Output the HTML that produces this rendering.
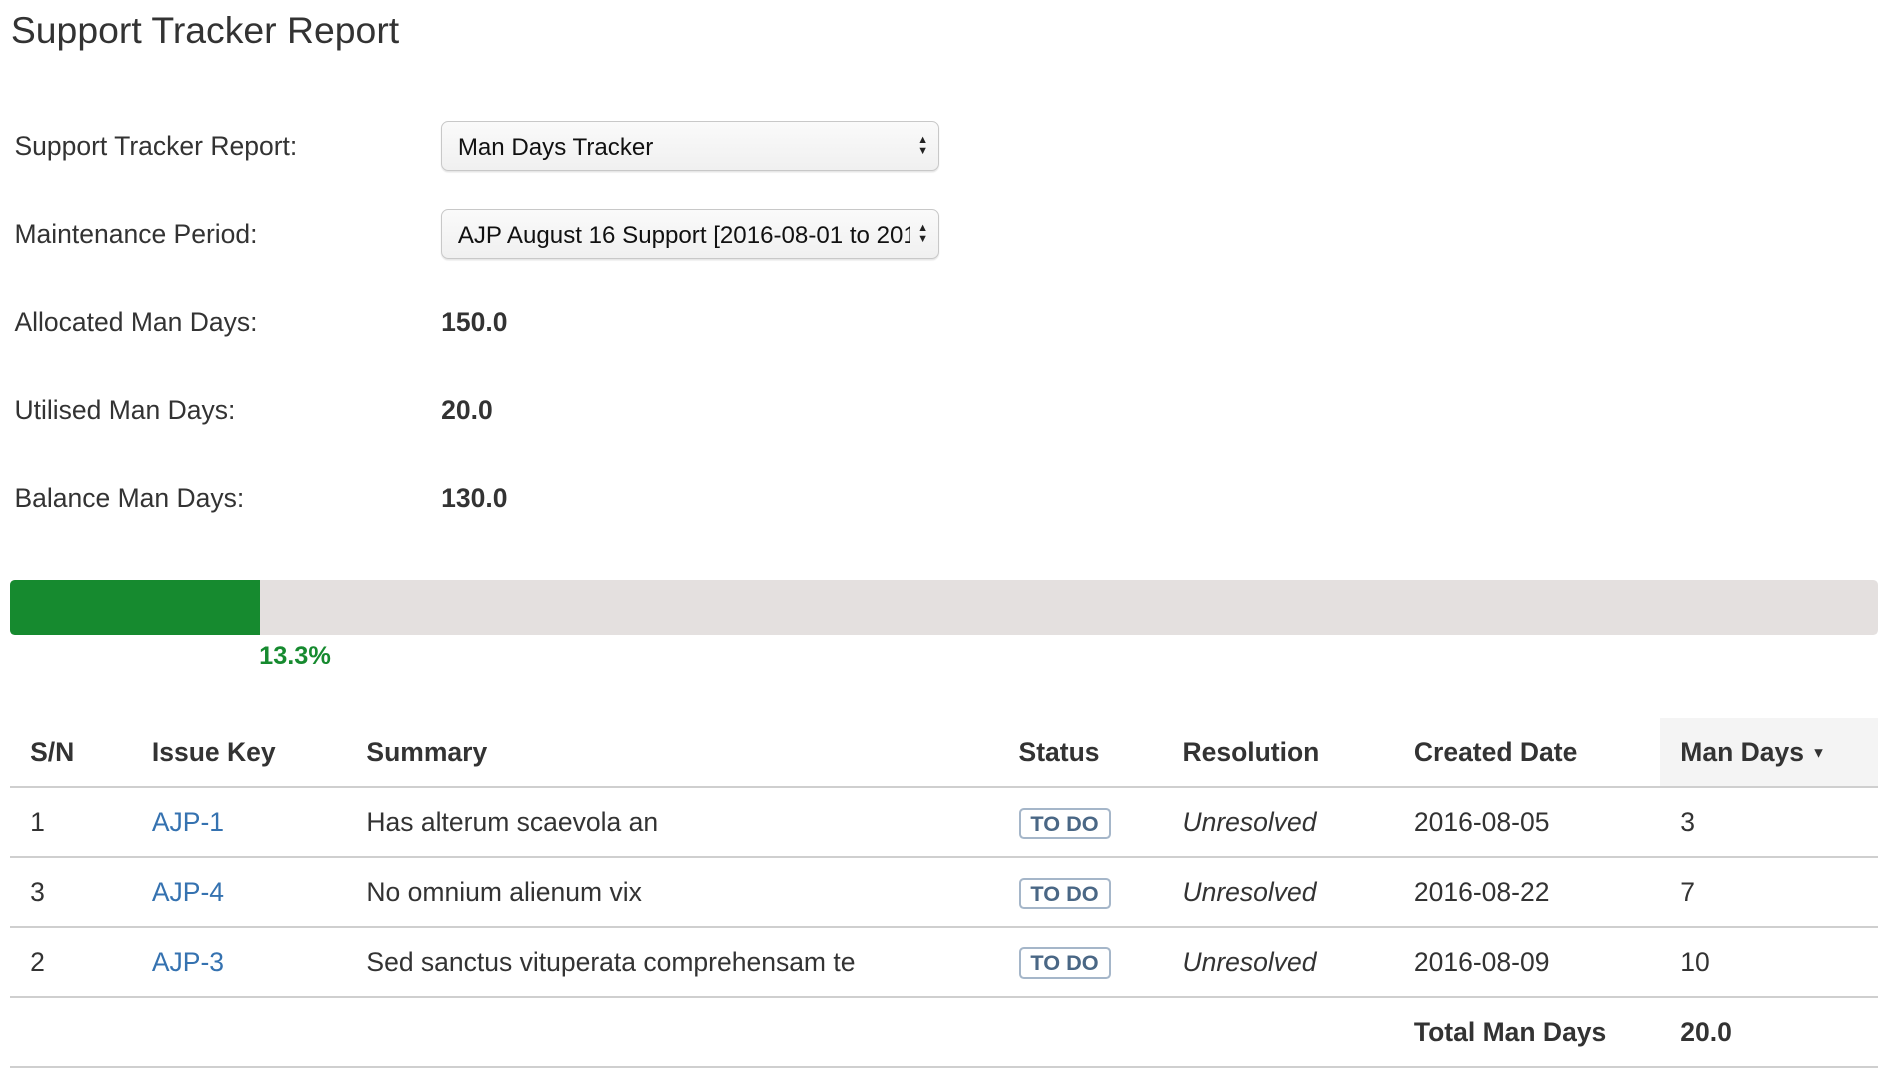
<!DOCTYPE html>
<html><head><meta charset="utf-8"><style>
html,body{margin:0;padding:0;background:#fff;overflow:hidden}
body{width:1568px;height:896px;zoom:1.20536;position:relative;font-family:"Liberation Sans",Arial,sans-serif;color:#333}
.a{position:absolute;white-space:nowrap;line-height:1}
.lbl{font-size:22px;left:12px}
.val{font-size:22px;left:366px;font-weight:bold}
.sel{position:absolute;left:366px;width:411px;height:40px;border:1px solid #c8c8c8;border-radius:6px;background:linear-gradient(#fafafa,#f0f0f0);box-shadow:0 1px 1px rgba(0,0,0,.1)}
.sel span{position:absolute;left:13px;top:10px;font-size:20px;color:#111;white-space:nowrap;overflow:hidden;width:375px}
.arr{position:absolute;right:8px;top:11px;font-size:9px;line-height:9px;color:#222}
.th{font-size:22px;font-weight:bold}
.td{font-size:22px}
.ln{position:absolute;left:8px;width:1550px;height:2px;background:#cfcfcf}
a{color:#3572b0;text-decoration:none}
.loz{position:absolute;left:845px;width:73px;height:23px;border:2px solid #a5b6c9;border-radius:4px;color:#4a6785;font-weight:bold;font-size:18px;text-align:center;line-height:24px;box-sizing:content-box}
</style></head><body>
<div class="a" style="left:9px;top:10px;font-size:31px;">Support Tracker Report</div>

<div class="a lbl" style="top:110px">Support Tracker Report:</div>
<div class="sel" style="top:100px"><span>Man Days Tracker</span><div class="arr">▲<br>▼</div></div>
<div class="a lbl" style="top:183px">Maintenance Period:</div>
<div class="sel" style="top:173px"><span>AJP August 16 Support [2016-08-01 to 2016-08-31]</span><div class="arr">▲<br>▼</div></div>
<div class="a lbl" style="top:256px">Allocated Man Days:</div>
<div class="a val" style="top:256px">150.0</div>
<div class="a lbl" style="top:329px">Utilised Man Days:</div>
<div class="a val" style="top:329px">20.0</div>
<div class="a lbl" style="top:402px">Balance Man Days:</div>
<div class="a val" style="top:402px">130.0</div>

<div style="position:absolute;left:8px;top:481px;width:1550px;height:46px;background:#e4e0df;border-radius:4px;overflow:hidden"><div style="width:208px;height:46px;background:#168a2f"></div></div>
<div class="a" style="left:215px;top:534px;font-size:21px;font-weight:bold;color:#168a2f">13.3%</div>

<div style="position:absolute;left:1377px;top:596px;width:181px;height:57px;background:#f4f4f4"></div>
<div class="a th" style="left:25px;top:613px">S/N</div>
<div class="a th" style="left:126px;top:613px">Issue Key</div>
<div class="a th" style="left:304px;top:613px">Summary</div>
<div class="a th" style="left:845px;top:613px">Status</div>
<div class="a th" style="left:981px;top:613px">Resolution</div>
<div class="a th" style="left:1173px;top:613px">Created Date</div>
<div class="a th" style="left:1394px;top:613px">Man Days <span style="font-size:12px;vertical-align:3px">▼</span></div>
<div class="ln" style="top:652px"></div>

<div class="a td" style="left:25px;top:671px">1</div>
<div class="a td" style="left:126px;top:671px"><a>AJP-1</a></div>
<div class="a td" style="left:304px;top:671px">Has alterum scaevola an</div>
<div class="loz" style="top:670px">TO DO</div>
<div class="a td" style="left:981px;top:671px;font-style:italic">Unresolved</div>
<div class="a td" style="left:1173px;top:671px">2016-08-05</div>
<div class="a td" style="left:1394px;top:671px">3</div>
<div class="ln" style="top:710px"></div>

<div class="a td" style="left:25px;top:729px">3</div>
<div class="a td" style="left:126px;top:729px"><a>AJP-4</a></div>
<div class="a td" style="left:304px;top:729px">No omnium alienum vix</div>
<div class="loz" style="top:728px">TO DO</div>
<div class="a td" style="left:981px;top:729px;font-style:italic">Unresolved</div>
<div class="a td" style="left:1173px;top:729px">2016-08-22</div>
<div class="a td" style="left:1394px;top:729px">7</div>
<div class="ln" style="top:768px"></div>

<div class="a td" style="left:25px;top:787px">2</div>
<div class="a td" style="left:126px;top:787px"><a>AJP-3</a></div>
<div class="a td" style="left:304px;top:787px">Sed sanctus vituperata comprehensam te</div>
<div class="loz" style="top:786px">TO DO</div>
<div class="a td" style="left:981px;top:787px;font-style:italic">Unresolved</div>
<div class="a td" style="left:1173px;top:787px">2016-08-09</div>
<div class="a td" style="left:1394px;top:787px">10</div>
<div class="ln" style="top:826px"></div>

<div class="a th" style="left:1173px;top:845px">Total Man Days</div>
<div class="a th" style="left:1394px;top:845px">20.0</div>
<div class="ln" style="top:884px"></div>
</body></html>
